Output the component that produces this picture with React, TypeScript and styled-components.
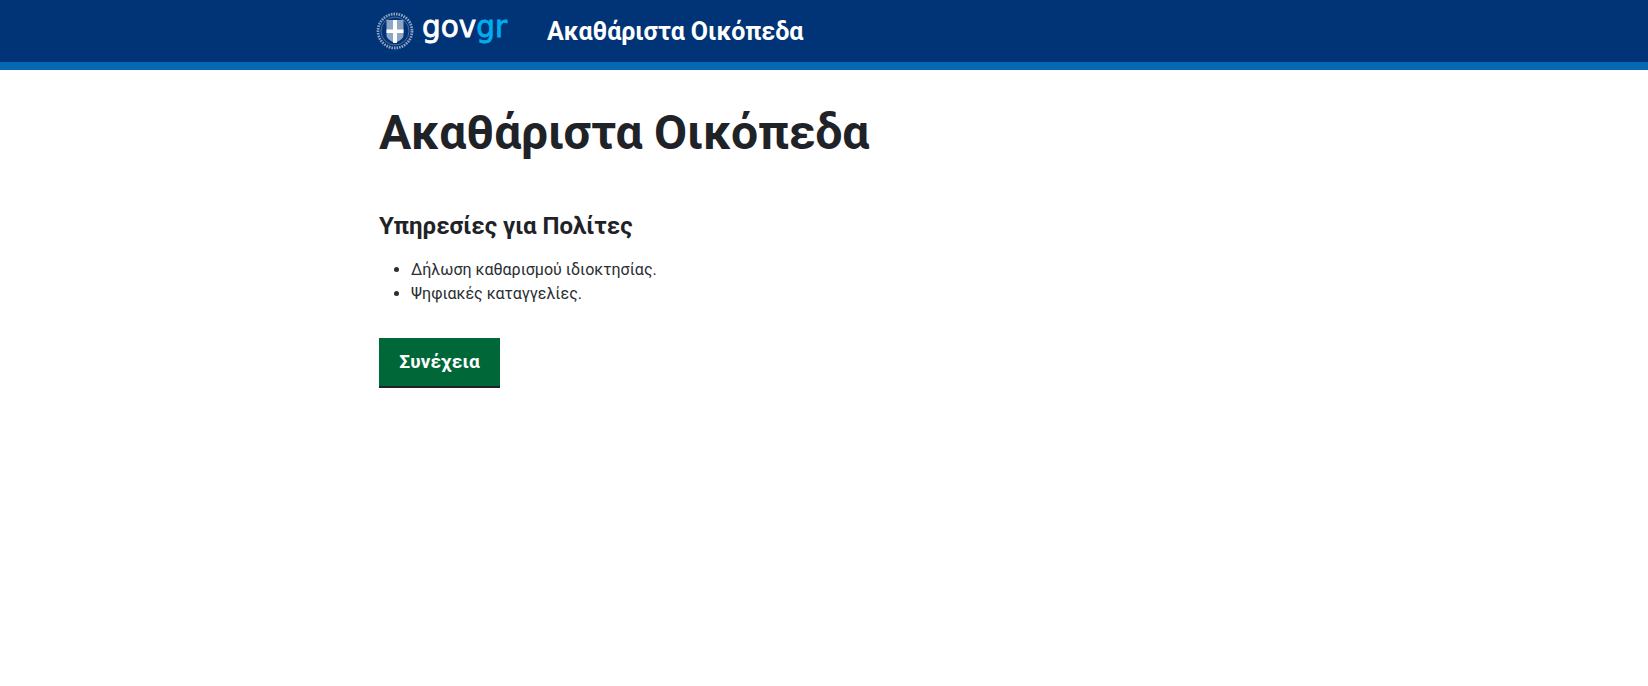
import React from "react";
import styled, { createGlobalStyle } from "styled-components";

const Global = createGlobalStyle`
  html, body { margin: 0; padding: 0; background: #fff; }
  body { font-family: Roboto, "Noto Sans", sans-serif; color: #1f2328; }
`;
const Header = styled.header`
  background: #003476;
  border-bottom: 8px solid #0568b3;
  height: 62px;
`;
const HeaderInner = styled.div`
  margin-left: 376px;
  height: 62px;
  display: flex;
  align-items: center;
`;
const Logo = styled.div`
  display: flex;
  align-items: center;
  gap: 8px;
  width: 171px;
`;
const Wordmark = styled.span`
  font-family: "DejaVu Sans", Inter, sans-serif;
  font-size: 29.5px;
  font-weight: 400;
  line-height: 40px;
  -webkit-text-stroke: 0.8px currentColor;
  color: #fff;
  margin-top: -9px;
`;
const Gr = styled.span`
  color: #00aeef;
`;
const ServiceName = styled.span`
  font-size: 25px;
  font-weight: 700;
  letter-spacing: -0.05px;
  color: #fff;
`;
const Main = styled.main`
  margin-left: 379px;
`;
const Title = styled.h1`
  margin: 33px 0 0;
  font-size: 48px;
  line-height: 60px;
  font-weight: 700;
  letter-spacing: -0.2px;
`;
const Subtitle = styled.h2`
  margin: 47px 0 0;
  font-size: 24px;
  line-height: 32px;
  font-weight: 700;
`;
const List = styled.ul`
  margin: 16px 0 0;
  padding-left: 32px;
  font-size: 16px;
  line-height: 24px;
  font-weight: 400;
  color: #2a2e33;
`;
const Button = styled.button`
  display: block;
  margin-top: 32px;
  width: 121px;
  height: 50px;
  padding: 0 0 2px;
  border: 0;
  border-bottom: 2px solid #1f2328;
  background: #006838;
  color: #fff;
  font-family: Roboto, sans-serif;
  font-size: 19px;
  font-weight: 700;
  letter-spacing: 0.2px;
`;

const Emblem = () => (
  <svg width="38" height="38" viewBox="0 0 38 38" aria-hidden="true">
    <circle cx="19" cy="19" r="17" fill="none" stroke="#8ea3c2" strokeWidth="2.8" strokeDasharray="1.6 1" />
    <circle cx="19" cy="19" r="14" fill="none" stroke="#5f7ea8" strokeWidth="0.8" />
    <path d="M10.5 8h17v15c0 4-4.500 6-8.500 8-4-2-8.500-4-8.500-8z" fill="#8fa5c4" />
    <path d="M17 8h4v9.500h6.500v3.500H21v9.800l-2 .2-2-.2V21h-6.500v-3.500H17z" fill="#fff" />
  </svg>
);

export default function App() {
  return (
    <>
      <Global />
      <Header>
        <HeaderInner>
          <Logo>
            <Emblem />
            <Wordmark>gov<Gr>gr</Gr></Wordmark>
          </Logo>
          <ServiceName>Ακαθάριστα Οικόπεδα</ServiceName>
        </HeaderInner>
      </Header>
      <Main>
        <Title>Ακαθάριστα Οικόπεδα</Title>
        <Subtitle>Υπηρεσίες για Πολίτες</Subtitle>
        <List>
          <li>Δήλωση καθαρισμού ιδιοκτησίας.</li>
          <li>Ψηφιακές καταγγελίες.</li>
        </List>
        <Button>Συνέχεια</Button>
      </Main>
    </>
  );
}
